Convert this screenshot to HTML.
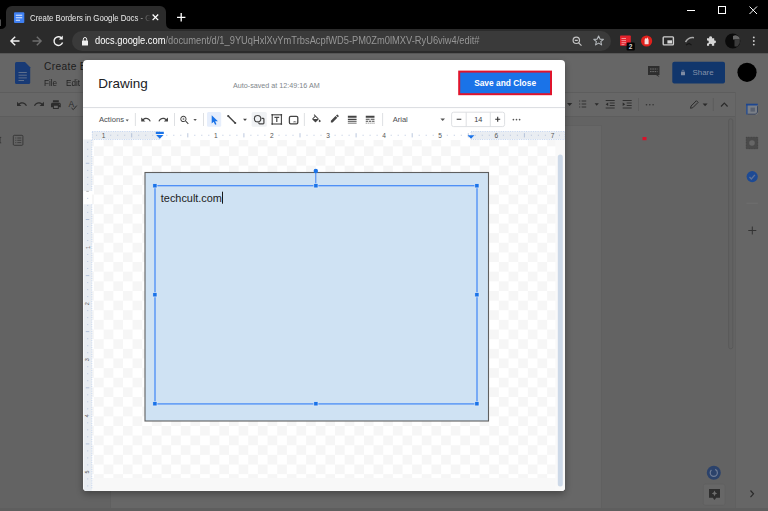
<!DOCTYPE html>
<html><head><meta charset="utf-8">
<style>
*{box-sizing:border-box;margin:0;padding:0}
html,body{width:768px;height:511px;overflow:hidden;background:#666;font-family:"Liberation Sans",sans-serif;}
.abs{position:absolute}
svg{position:absolute;overflow:visible}
#titlebar{left:0;top:0;width:768px;height:29px;background:#000}
#tab{left:6.300px;top:6px;width:159.700px;height:24px;background:#2b2b2b;border-radius:6px 6px 0 0}
#tabtxt{left:29.5px;top:12.600px;font-size:8.8px;color:#ececec;white-space:nowrap;width:136px;overflow:hidden;transform:scaleX(.887);transform-origin:0 0;-webkit-mask-image:linear-gradient(90deg,#000 88%,transparent 100%)}
#toolbar{left:0;top:28.800px;width:768px;height:25.200px;background:linear-gradient(#2b2b2b 0,#2b2b2b 23.800px,#565656 23.800px)}
#pill{left:72px;top:31px;width:538.500px;height:19.500px;border-radius:10px;background:#3a3a3a}
#url{left:95px;top:35px;font-size:10.4px;color:#fff;white-space:nowrap;transform:scaleX(.897);transform-origin:0 0}
#url span{color:#969696}
#page{left:0;top:53.5px;width:768px;height:458px;background:#666}
.dim{color:#1c1c1c}
#dlg{left:83.300px;top:60px;width:481.700px;height:431px;background:#fff;border-radius:4px;overflow:hidden;box-shadow:0 3px 7px rgba(0,0,0,.32)}
</style></head><body>
<!-- CHROME -->
<div class="abs" id="titlebar"></div>
<div class="abs" id="tab"></div>
<div class="abs" id="tabtxt">Create Borders in Google Docs - G</div>
<div class="abs" id="toolbar"></div>
<div class="abs" id="pill"></div>
<div class="abs" id="url">docs.google.com<span>/document/d/1_9YUqHxlXvYmTrbsAcpfWD5-PM0Zm0lMXV-RyU6viw4/edit#</span></div>

<svg style="left:0;top:0" width="768" height="54" viewBox="0 0 768 54">
<!-- tab curves -->
<path d="M0.500 29 Q6.300 29 6.300 23 L6.300 29 Z" fill="#2b2b2b"/><rect x="0" y="19.500" width="0.800" height="6.500" fill="#666"/>
<path d="M172 29 Q166 29 166 23 L166 29 Z" fill="#2b2b2b"/>
<!-- favicon docs -->
<rect x="14" y="12.200" width="10.300" height="10.800" rx="1" fill="#3f80f2"/>
<path d="M15.800 15.200h6.400M15.800 17.700h6.400M15.800 20.300h4.200" stroke="#dfe9fd" stroke-width="1.100"/>
<!-- tab close -->
<path d="M152.600 14.500l5.600 5.600M158.200 14.500l-5.600 5.600" stroke="#fff" stroke-width="1.3"/>
<!-- new tab plus -->
<path d="M177 17.300h8.400M181.200 13.100v8.400" stroke="#fff" stroke-width="1.300"/>
<!-- window controls -->
<path d="M687 10.500h8" stroke="#fff" stroke-width="1"/>
<rect x="718.500" y="6.500" width="7" height="7" fill="none" stroke="#fff" stroke-width="1"/>
<path d="M749.500 6.500l7.500 7.500M757 6.500l-7.500 7.500" stroke="#fff" stroke-width="1"/>
<!-- back -->
<path transform="translate(0 -.5)" d="M19.500 41.500h-8M15.200 37.200l-4.300 4.300 4.300 4.300" stroke="#f0f0f0" stroke-width="1.4" fill="none"/>
<!-- forward -->
<path transform="translate(0 -.5)" d="M32.500 41.500h8M36.800 37.200l4.300 4.300-4.300 4.300" stroke="#6e6e6e" stroke-width="1.4" fill="none"/>
<!-- reload -->
<path transform="translate(-.8 -.4)" d="M62.300 38.300a4.400 4.400 0 1 0 1.100 4.700" stroke="#f0f0f0" stroke-width="1.4" fill="none"/>
<path transform="translate(-.8 -.4)" d="M63.600 35.800v4h-4z" fill="#f0f0f0"/>
<!-- lock -->
<rect x="82" y="40.500" width="6" height="5" rx="0.600" fill="#f0f0f0"/>
<path d="M83.300 40.800v-1.600a1.700 1.700 0 0 1 3.400 0v1.600" stroke="#f0f0f0" stroke-width="1" fill="none"/>
<!-- zoom -->
<circle cx="576.300" cy="40.300" r="3.200" stroke="#c4c4c4" stroke-width="1.200" fill="none"/>
<path d="M578.600 42.800l2.900 2.900M574.800 40.300h3" stroke="#c4c4c4" stroke-width="1.200"/>
<!-- star -->
<path transform="translate(-.4 -.3)" d="M599 36.300l1.400 3.100 3.400.3-2.600 2.200.8 3.300-3-1.800-3 1.800.8-3.300-2.600-2.200 3.400-.3z" stroke="#b4b8bc" stroke-width="1.100" fill="none" stroke-linejoin="round"/>
<!-- ext1 red -->
<rect x="620" y="35.400" width="10.800" height="10.400" rx="0.800" fill="#e3222c"/>
<path d="M621.500 38.500h4.500M621.500 40.600h4.500M621.500 42.700h4.500M621.500 44.600h3" stroke="#f3b0b3" stroke-width="0.800" fill="none"/>
<rect x="626.600" y="42.500" width="8.200" height="8" rx="1.200" fill="#050505"/>
<text x="628.800" y="49.200" font-size="6.600" font-weight="700" fill="#d0d4d8" font-family="Liberation Sans, sans-serif">2</text>
<!-- ext2 red circle -->
<circle cx="646.600" cy="41" r="5.600" fill="#e0201c"/>
<path d="M644.600 44.200v-4.500l1-1.800 1 .8.800-1.500 1.200 2.500v4.500z" fill="#f4dcdc"/>
<!-- pip -->
<rect x="663.200" y="36.900" width="10.200" height="8" rx="0.800" fill="none" stroke="#cfcfcf" stroke-width="1.400"/>
<rect x="667.400" y="40.300" width="4.600" height="3.200" fill="#d8d8d8"/>
<!-- curved -->
<path d="M685.500 42q3-5 8.500-4.300" stroke="#a8a8a8" stroke-width="1.500" fill="none"/>
<path d="M686 45l3-1.500 2.500 1.500" stroke="#161616" stroke-width="1.200" fill="none"/>
<!-- puzzle -->
<path transform="translate(1 -0.300)" d="M706 38.500h2.300a1.400 1.400 0 1 1 2.600 0h2.300v2.300a1.400 1.400 0 1 1 0 2.700v2.500h-2.400a1.400 1.400 0 1 0-2.600 0H706v-2.400a1.400 1.400 0 1 0 0-2.700z" fill="#d6d6d6"/>
<!-- avatar -->
<circle cx="732.700" cy="41" r="7.600" fill="#0a0a0a"/>
<path d="M733 36q3-2 6 1l1 2.500h-7z" fill="#666"/>
<path d="M734.500 40h5.300v3l-2.300 3.500h-3z" fill="#3c3c3c"/>
<!-- menu -->
<circle cx="753.800" cy="37.400" r="0.950" fill="#cfcfcf"/><circle cx="753.800" cy="41" r="0.950" fill="#cfcfcf"/><circle cx="753.800" cy="44.600" r="0.950" fill="#cfcfcf"/>
</svg>

<!-- PAGE -->
<div class="abs" id="page"></div>

<div class="abs" style="left:0;top:92px;width:735px;height:25px;background:#676767;border-top:1px solid #5d5d5d;border-bottom:1px solid #5d5d5d"></div>
<div class="abs" style="left:0;top:117px;width:735px;height:394px;background:#636363"></div>
<div class="abs" style="left:110px;top:125.300px;width:492px;height:386px;background:#676767;border:1px solid #606060;border-bottom:0"></div>
<div class="abs" style="left:735px;top:92px;width:1px;height:419px;background:#606060"></div>
<div class="abs" style="left:0;top:508px;width:768px;height:3px;background:#5e5e5e"></div>
<div class="abs dim" style="left:44px;top:60.500px;font-size:10.200px;white-space:nowrap;letter-spacing:.35px">Create Borders</div>
<div class="abs dim" style="left:44px;top:78px;font-size:8.600px;white-space:nowrap;color:#222;transform:scaleX(.95);transform-origin:0 0">File</div>
<div class="abs dim" style="left:65.700px;top:78px;font-size:8.600px;white-space:nowrap;color:#222;transform:scaleX(.95);transform-origin:0 0">Edit</div>
<svg style="left:0;top:54px" width="768" height="457" viewBox="0 54 768 457">
<!-- docs icon -->
<path d="M15 63.500q0-1.500 1.500-1.500h8.500l5.200 5.200v15.300q0 1.500-1.500 1.500h-12.200q-1.500 0-1.500-1.500z" fill="#183a75"/>
<path d="M18.500 72.500h8.300M18.500 75.200h8.300M18.500 77.900h8.300M18.500 80.500h5.500" stroke="#66758f" stroke-width="0.9"/>
<!-- toolbar icons left -->
<path transform="translate(16.03 98.30) scale(0.486)" d="M12.500 8c-2.650 0-5.050.990-6.900 2.600L2 7v9h9l-3.620-3.620c1.390-1.160 3.160-1.880 5.120-1.880 3.540 0 6.550 2.310 7.600 5.500l2.370-.780C21.080 11.030 17.150 8 12.500 8z" fill="#2c2c2c"/>
<path transform="translate(33.25 98.30) scale(0.486)" d="M18.400 10.600C16.550 8.990 14.150 8 11.500 8c-4.650 0-8.580 3.030-9.960 7.220L3.900 16c1.050-3.190 4.050-5.500 7.600-5.500 1.950 0 3.730.720 5.120 1.880L13 16h9V7l-3.600 3.600z" fill="#2c2c2c"/>
<path transform="translate(50.00 98.80) scale(0.49)" d="M19 8H5c-1.660 0-3 1.340-3 3v6h4v4h12v-4h4v-6c0-1.660-1.340-3-3-3zm-3 11H8v-5h8v5zm3-7c-.550 0-1-.450-1-1s.450-1 1-1 1 .450 1 1-.450 1-1 1zm-1-9H6v4h12V3z" fill="#2c2c2c"/>
<text x="68.500" y="107" font-size="8.500" fill="#2a2a2a" font-family="Liberation Sans, sans-serif">A</text>
<path d="M71.500 108l1.800 1.600 3.500-4" stroke="#2a2a2a" stroke-width="1" fill="none"/>
<!-- outline icon -->
<rect x="13.300" y="135.300" width="9.600" height="10" rx="1" fill="none" stroke="#333" stroke-width="0.900"/>
<path d="M15.300 138h1M17.300 138h4M15.300 140.300h1M17.300 140.300h4M15.300 142.600h1M17.300 142.600h4" stroke="#333" stroke-width="0.800"/>
<!-- right header -->
<path d="M648 66h11.500v9h-1.500l1.500 2.200-3.500-2.200h-8z" fill="#2e2e2e"/>
<path d="M650 69h7.500M650 71.600h7.500" stroke="#777" stroke-width="0.900" stroke-dasharray="1.600 0.700"/>
<rect x="672.300" y="61.800" width="52.700" height="21.600" rx="2" fill="#11366c"/>
<rect x="681" y="71.800" width="4" height="3.500" rx="0.500" fill="#7f8ca4"/><path d="M682 71.800v-.7a1 1 0 0 1 2 0v.7" stroke="#7f8ca4" stroke-width="0.700" fill="none"/>
<text x="692.500" y="74.800" font-size="7.900" fill="#8391a9" font-family="Liberation Sans, sans-serif">Share</text>
<circle cx="747" cy="72.300" r="9.600" fill="#000"/>
<!-- right toolbar -->
<path d="M567 103l2.600 3 2.600-3z" fill="#2a2a2a"/>
<path transform="translate(-1.800 0)" d="M581 101h1M583.500 101h4.500M581 104h1M583.500 104h4.500M581 107h1M583.500 107h4.500" stroke="#2a2a2a" stroke-width="0.900"/>
<path d="M594.600 103.300l2.100 2.500 2.100-2.500z" fill="#2a2a2a"/>
<g transform="translate(-5.300 0)"><path d="M611 100.500h9M615 103h5M615 105.500h5M611 108h9" stroke="#2a2a2a" stroke-width="0.900"/><path d="M613.500 102.500v3.500l-2.500-1.750z" fill="#2a2a2a"/></g>
<g transform="translate(-4.300 0)"><path d="M627 100.500h9M631 103h5M631 105.500h5M627 108h9" stroke="#2a2a2a" stroke-width="0.900"/><path d="M627 102.500v3.500l2.500-1.750z" fill="#2a2a2a"/></g>
<path d="M638.500 98v13" stroke="#5a5a5a" stroke-width="0.800"/>
<circle cx="646.500" cy="104.800" r="0.800" fill="#333"/><circle cx="649.800" cy="104.800" r="0.800" fill="#333"/><circle cx="653.100" cy="104.800" r="0.800" fill="#333"/>
<path d="M690.500 108.300l.6-2.300 5.300-5.300 1.700 1.700-5.300 5.300z" fill="none" stroke="#2a2a2a" stroke-width="1"/>
<path d="M702.600 103.500l2.500 2.800 2.500-2.800z" fill="#2a2a2a"/>
<path d="M713.300 98v13" stroke="#5a5a5a" stroke-width="0.800"/>
<path d="M721 106.500l3.300-3.300 3.300 3.300" stroke="#2a2a2a" stroke-width="1.200" fill="none"/>
<!-- scrollbar -->
<rect x="728.600" y="118.800" width="4.200" height="230" rx="2.100" fill="#626262" stroke="#565656" stroke-width="0.700"/>
<!-- red dot -->
<rect x="642.500" y="137" width="4" height="3.200" fill="#d8122a"/>
<!-- side panel -->
<rect x="746.300" y="104" width="11.200" height="10.600" rx="0.800" fill="#7a7f87"/>
<path d="M746 104.600h11.800" stroke="#1d4690" stroke-width="1.800"/><path d="M746.900 104v10.600" stroke="#1d4690" stroke-width="1.300"/><path d="M747.500 114.200h8l2-2v-6" stroke="#39455c" stroke-width="1" fill="none"/>
<rect x="750.500" y="107.600" width="4.400" height="4" fill="#596170"/>
<rect x="746.300" y="137.300" width="11.400" height="11.400" fill="#4a4a4a" stroke="#3e3e3e" stroke-width="0.800" stroke-dasharray="1 0.600"/>
<circle cx="752" cy="143" r="2.800" fill="#666"/>
<circle cx="752.200" cy="176.600" r="5.600" fill="#1d4a94"/>
<path d="M749.500 177.100l1.800 1.800 3.600-4" stroke="#5f7299" stroke-width="1.400" fill="none"/>
<path d="M746.500 203.200h11.300" stroke="#727272" stroke-width="0.800"/>
<path d="M748.300 230.500h8M752.300 226.500v8" stroke="#333" stroke-width="1"/>
<circle cx="713.800" cy="472.700" r="7" fill="#2b426b"/>
<circle cx="713.800" cy="472.700" r="3.600" fill="none" stroke="#6d7b95" stroke-width="1.200" stroke-dasharray="14 4"/>
<rect x="703.300" y="484" width="21.700" height="21.300" rx="2" fill="#676767" stroke="#5f5f5f" stroke-width="0.800"/>
<path d="M709 489h11v8.800h-3.800l-1.700 2.200-1.700-2.200h-3.800z" fill="#2e2e2e"/>
<path d="M714.500 490.600l.9 1.900 1.900.9-1.900.9-.9 1.900-.9-1.900-1.900-.9 1.900-.9z" fill="#6e6e6e"/>
<path d="M750.500 490.500l3 3.300-3 3.300" stroke="#2a2a2a" stroke-width="1.200" fill="none"/>
<path d="M1.200 137.400h-1.200v5.400h1.200" stroke="#333" stroke-width="0.900" fill="none"/>
</svg>

<!-- DIALOG -->
<div class="abs" id="dlg">

<svg style="left:0;top:0" width="482" height="431" viewBox="83 60 482 431">
<defs>
<pattern id="chk" x="84.400" y="136.750" width="19.280" height="19.280" patternUnits="userSpaceOnUse">
<rect width="19.280" height="19.280" fill="#fff"/>
<rect x="0" y="0" width="9.640" height="9.640" fill="#f6f6f6"/><rect x="9.640" y="9.640" width="9.640" height="9.640" fill="#f6f6f6"/>
</pattern>
</defs>
<!-- header -->
<text x="98.300" y="88.400" font-size="13.500" fill="#202124" font-family="Liberation Sans, sans-serif">Drawing</text>
<text x="233" y="88" font-size="7.200" fill="#80868b" font-family="Liberation Sans, sans-serif">Auto-saved at 12:49:16 AM</text>
<rect x="459.200" y="71.600" width="91.800" height="22.600" fill="#1a73e8" stroke="#e0142c" stroke-width="2"/>
<text x="505.100" y="85.800" font-size="8.400" font-weight="700" fill="#fff" text-anchor="middle" font-family="Liberation Sans, sans-serif">Save and Close</text>
<path d="M83 107.600h482" stroke="#dadce0" stroke-width="1"/>
<!-- toolbar -->
<text x="98.900" y="122" font-size="7.650" fill="#4a4d50" font-family="Liberation Sans, sans-serif">Actions</text>
<path d="M125.600 119.600l1.600 1.800 1.600-1.800z" fill="#555"/>
<path d="M135.400 113v13M174.500 113v13M203.500 113v13M304.400 113v13M382.600 113v13" stroke="#dadce0" stroke-width="0.900"/>
<path transform="translate(140.27 114.13) scale(0.467)" d="M12.500 8c-2.650 0-5.050.990-6.900 2.600L2 7v9h9l-3.620-3.620c1.390-1.160 3.160-1.880 5.120-1.880 3.540 0 6.550 2.310 7.600 5.500l2.370-.780C21.080 11.030 17.150 8 12.500 8z" fill="#444"/>
<path transform="translate(157.70 114.13) scale(0.467)" d="M18.400 10.600C16.550 8.990 14.150 8 11.500 8c-4.650 0-8.580 3.030-9.960 7.220L3.900 16c1.050-3.190 4.050-5.500 7.600-5.500 1.950 0 3.730.720 5.120 1.880L13 16h9V7l-3.600 3.600z" fill="#444"/>
<path transform="translate(178.86 114.36) scale(0.48)" d="M15.500 14h-.790l-.280-.270C15.410 12.590 16 11.110 16 9.500 16 5.910 13.090 3 9.500 3S3 5.910 3 9.500 5.910 16 9.500 16c1.610 0 3.090-.590 4.230-1.570l.270.280v.790l5 4.990L20.490 19l-4.990-5zm-6 0C7.010 14 5 11.990 5 9.500S7.010 5 9.500 5 14 7.010 14 9.500 11.990 14 9.500 14zm2.500-4h-2v2H9v-2H7V9h2V7h1v2h2v1z" fill="#444"/>
<path d="M193.400 119.100l1.700 1.900 1.700-1.900z" fill="#555"/>
<rect x="207" y="112" width="14.200" height="14.800" rx="1.500" fill="#e6eefc"/>
<path d="M211.700 115.300v8.300l2-1.800 1.400 3 1.400-.65-1.400-2.950h2.800z" fill="#1a73e8"/>
<path d="M228.200 116l7 7" stroke="#444" stroke-width="1.400"/><circle cx="228.200" cy="116" r="1.100" fill="#444"/><circle cx="235.200" cy="123" r="1.100" fill="#444"/>
<path d="M243 118.700l2 2.200 2-2.200z" fill="#444"/>
<rect x="251.600" y="112" width="15.200" height="14.800" rx="1.500" fill="#f0f2f4"/>
<circle cx="257.600" cy="118.700" r="3.200" stroke="#444" stroke-width="1.200" fill="none"/><path d="M258.800 122.500v.5q0 .8.800.8h3.500q.8 0 .8-.8v-3.800q0-.8-.8-.8h-1.500" stroke="#444" stroke-width="1.200" fill="none"/>
<rect x="272.200" y="114.800" width="9.200" height="9.200" stroke="#444" stroke-width="1.100" fill="none"/><path d="M274.400 117.300h4.800M276.800 117.300v4.600" stroke="#444" stroke-width="1.200"/><path d="M271.500 114.100h1.400v1.400h-1.400zM280.700 114.100h1.400v1.400h-1.400zM271.500 123.300h1.400v1.400h-1.400zM280.700 123.300h1.400v1.400h-1.400z" fill="#444"/>
<rect x="289.400" y="116.400" width="8.400" height="7.400" rx="1.300" stroke="#444" stroke-width="1.300" fill="none"/><path d="M293 122.300l1.200-1.300 .9.900.6-.6 1 1z" fill="#444"/>
<path transform="translate(310.80 114.25) scale(0.467)" d="M16.560 8.940L7.620 0 6.210 1.410l2.380 2.380-5.150 5.150c-.590.590-.590 1.540 0 2.120l5.500 5.500c.290.290.680.440 1.060.440s.770-.150 1.060-.440l5.500-5.500c.590-.580.590-1.530 0-2.120zM5.210 10L10 5.210 14.790 10H5.210zM19 11.500s-2 2.170-2 3.500c0 1.100.900 2 2 2s2-.900 2-2c0-1.330-2-3.500-2-3.500z" fill="#444"/>
<path transform="translate(329.00 114.50) scale(0.467)" d="M17.750 7L14 3.250l-10 10V17h3.750l10-10zm2.960-2.960c.390-.390.390-1.020 0-1.410L18.370.290c-.390-.390-1.020-.390-1.410 0L15 2.250 18.750 6l1.960-1.960z" fill="#444"/>
<path transform="translate(346.40 113.90) scale(0.485)" d="M3 17h18v-2H3v2zm0 3h18v-1H3v1zm0-7h18v-3H3v3zm0-9v4h18V4H3z" fill="#444"/>
<path transform="translate(364.30 113.90) scale(0.485)" d="M3 16h5v-2H3v2zm6.500 0h5v-2h-5v2zm6.500 0h5v-2h-5v2zM3 20h2v-2H3v2zm4 0h2v-2H7v2zm4 0h2v-2h-2v2zm4 0h2v-2h-2v2zm4 0h2v-2h-2v2zM3 12h8v-2H3v2zm10 0h8v-2h-8v2zM3 4v4h18V4H3z" fill="#444"/>
<text x="392.700" y="122" font-size="7.550" fill="#4a4d50" font-family="Liberation Sans, sans-serif">Arial</text>
<path d="M440.400 118.500l2.300 2.600 2.300-2.600z" fill="#555"/>
<rect x="451.600" y="112.200" width="53" height="14.400" rx="2" fill="#fff" stroke="#dadce0" stroke-width="0.900"/>
<path d="M466.200 112.200v14.400M490.300 112.200v14.400" stroke="#dadce0" stroke-width="0.900"/>
<path d="M456.700 119.300h4.600" stroke="#333" stroke-width="1.100"/>
<text x="478.300" y="121.900" font-size="7.300" fill="#3c4043" text-anchor="middle" font-family="Liberation Sans, sans-serif">14</text>
<path d="M495.200 119.300h5M497.700 116.800v5" stroke="#333" stroke-width="1.100"/>
<circle cx="513.400" cy="119.600" r="0.850" fill="#555"/><circle cx="516.500" cy="119.600" r="0.850" fill="#555"/><circle cx="519.600" cy="119.600" r="0.850" fill="#555"/>
<!-- canvas -->
<rect x="83" y="131" width="482" height="360" fill="#fff"/>
<rect x="92" y="140" width="473" height="338" fill="url(#chk)"/>
<rect x="92" y="478" width="473" height="13" fill="#f8f8f8"/>
<rect x="555.300" y="140" width="10" height="351" fill="#f9f9f9"/>
<!-- rulers -->
<rect x="92" y="131.300" width="67.800" height="8.200" fill="#e9edf2"/>
<rect x="471" y="131.300" width="94" height="8.200" fill="#e9edf2"/>
<rect x="92.300" y="131.500" width="67.500" height="8" fill="none" stroke="#a9c4ee" stroke-width="0.700" stroke-dasharray="0.800 1.500"/>
<rect x="471" y="131.500" width="94" height="8" fill="none" stroke="#a9c4ee" stroke-width="0.700" stroke-dasharray="0.800 1.500"/>
<rect x="83.500" y="139.500" width="8.300" height="351.500" fill="#e9edf2"/>
<rect x="83.500" y="191" width="8.500" height="13.300" fill="#fff"/>
<path d="M91.800 140v51M91.800 204.500v284" stroke="#a9c4ee" stroke-width="0.700" stroke-dasharray="0.800 1.500"/>
<path d="M96.6 134.700v1.300" stroke="#b4c3dd" stroke-width="0.7"/><path d="M110.7 134.700v1.300" stroke="#b4c3dd" stroke-width="0.7"/><path d="M117.7 134.700v1.300" stroke="#b4c3dd" stroke-width="0.7"/><path d="M124.7 134.700v1.300" stroke="#b4c3dd" stroke-width="0.7"/><path d="M131.7 133.2v4.200" stroke="#9db0d0" stroke-width="0.7"/><path d="M138.7 134.700v1.300" stroke="#b4c3dd" stroke-width="0.7"/><path d="M145.7 134.700v1.300" stroke="#b4c3dd" stroke-width="0.7"/><path d="M152.7 134.700v1.300" stroke="#b4c3dd" stroke-width="0.7"/><path d="M166.8 134.700v1.300" stroke="#b4c3dd" stroke-width="0.7"/><path d="M173.8 134.700v1.300" stroke="#b4c3dd" stroke-width="0.7"/><path d="M180.8 134.700v1.300" stroke="#b4c3dd" stroke-width="0.7"/><path d="M187.8 133.2v4.200" stroke="#9db0d0" stroke-width="0.7"/><path d="M194.8 134.700v1.300" stroke="#b4c3dd" stroke-width="0.7"/><path d="M201.8 134.700v1.300" stroke="#b4c3dd" stroke-width="0.7"/><path d="M208.8 134.700v1.300" stroke="#b4c3dd" stroke-width="0.7"/><path d="M222.9 134.700v1.300" stroke="#b4c3dd" stroke-width="0.7"/><path d="M229.9 134.700v1.300" stroke="#b4c3dd" stroke-width="0.7"/><path d="M236.9 134.700v1.300" stroke="#b4c3dd" stroke-width="0.7"/><path d="M243.9 133.2v4.200" stroke="#9db0d0" stroke-width="0.7"/><path d="M250.9 134.700v1.300" stroke="#b4c3dd" stroke-width="0.7"/><path d="M257.9 134.700v1.300" stroke="#b4c3dd" stroke-width="0.7"/><path d="M264.9 134.700v1.300" stroke="#b4c3dd" stroke-width="0.7"/><path d="M279.0 134.700v1.300" stroke="#b4c3dd" stroke-width="0.7"/><path d="M286.0 134.700v1.300" stroke="#b4c3dd" stroke-width="0.7"/><path d="M293.0 134.700v1.300" stroke="#b4c3dd" stroke-width="0.7"/><path d="M300.0 133.2v4.200" stroke="#9db0d0" stroke-width="0.7"/><path d="M307.0 134.700v1.300" stroke="#b4c3dd" stroke-width="0.7"/><path d="M314.0 134.700v1.300" stroke="#b4c3dd" stroke-width="0.7"/><path d="M321.0 134.700v1.300" stroke="#b4c3dd" stroke-width="0.7"/><path d="M335.1 134.700v1.300" stroke="#b4c3dd" stroke-width="0.7"/><path d="M342.1 134.700v1.300" stroke="#b4c3dd" stroke-width="0.7"/><path d="M349.1 134.700v1.300" stroke="#b4c3dd" stroke-width="0.7"/><path d="M356.1 133.2v4.200" stroke="#9db0d0" stroke-width="0.7"/><path d="M363.1 134.700v1.300" stroke="#b4c3dd" stroke-width="0.7"/><path d="M370.1 134.700v1.300" stroke="#b4c3dd" stroke-width="0.7"/><path d="M377.1 134.700v1.300" stroke="#b4c3dd" stroke-width="0.7"/><path d="M391.2 134.700v1.300" stroke="#b4c3dd" stroke-width="0.7"/><path d="M398.2 134.700v1.300" stroke="#b4c3dd" stroke-width="0.7"/><path d="M405.2 134.700v1.300" stroke="#b4c3dd" stroke-width="0.7"/><path d="M412.2 133.2v4.200" stroke="#9db0d0" stroke-width="0.7"/><path d="M419.2 134.700v1.300" stroke="#b4c3dd" stroke-width="0.7"/><path d="M426.2 134.700v1.300" stroke="#b4c3dd" stroke-width="0.7"/><path d="M433.2 134.700v1.300" stroke="#b4c3dd" stroke-width="0.7"/><path d="M447.3 134.700v1.300" stroke="#b4c3dd" stroke-width="0.7"/><path d="M454.3 134.700v1.300" stroke="#b4c3dd" stroke-width="0.7"/><path d="M461.3 134.700v1.300" stroke="#b4c3dd" stroke-width="0.7"/><path d="M468.3 133.2v4.200" stroke="#9db0d0" stroke-width="0.7"/><path d="M475.3 134.700v1.300" stroke="#b4c3dd" stroke-width="0.7"/><path d="M482.3 134.700v1.300" stroke="#b4c3dd" stroke-width="0.7"/><path d="M489.3 134.700v1.300" stroke="#b4c3dd" stroke-width="0.7"/><path d="M503.4 134.700v1.300" stroke="#b4c3dd" stroke-width="0.7"/><path d="M510.4 134.700v1.300" stroke="#b4c3dd" stroke-width="0.7"/><path d="M517.4 134.700v1.300" stroke="#b4c3dd" stroke-width="0.7"/><path d="M524.4 133.2v4.200" stroke="#9db0d0" stroke-width="0.7"/><path d="M531.4 134.700v1.300" stroke="#b4c3dd" stroke-width="0.7"/><path d="M538.4 134.700v1.300" stroke="#b4c3dd" stroke-width="0.7"/><path d="M545.4 134.700v1.300" stroke="#b4c3dd" stroke-width="0.7"/><path d="M559.5 134.700v1.300" stroke="#b4c3dd" stroke-width="0.7"/>
<text x="103.7" y="137.800" font-size="6.600" fill="#555" text-anchor="middle" font-family="Liberation Sans, sans-serif">1</text><text x="215.8" y="137.800" font-size="6.600" fill="#555" text-anchor="middle" font-family="Liberation Sans, sans-serif">1</text><text x="271.9" y="137.800" font-size="6.600" fill="#555" text-anchor="middle" font-family="Liberation Sans, sans-serif">2</text><text x="328.1" y="137.800" font-size="6.600" fill="#555" text-anchor="middle" font-family="Liberation Sans, sans-serif">3</text><text x="384.1" y="137.800" font-size="6.600" fill="#555" text-anchor="middle" font-family="Liberation Sans, sans-serif">4</text><text x="440.2" y="137.800" font-size="6.600" fill="#555" text-anchor="middle" font-family="Liberation Sans, sans-serif">5</text><text x="496.4" y="137.800" font-size="6.600" fill="#555" text-anchor="middle" font-family="Liberation Sans, sans-serif">6</text><text x="552.5" y="137.800" font-size="6.600" fill="#555" text-anchor="middle" font-family="Liberation Sans, sans-serif">7</text>
<path d="M87 142.3h1.300" stroke="#b4c3dd" stroke-width="0.7"/><path d="M87 149.3h1.300" stroke="#b4c3dd" stroke-width="0.7"/><path d="M87 156.3h1.300" stroke="#b4c3dd" stroke-width="0.7"/><path d="M85.800 163.3h3.500" stroke="#9db0d0" stroke-width="0.7"/><path d="M87 170.4h1.300" stroke="#b4c3dd" stroke-width="0.7"/><path d="M87 177.4h1.300" stroke="#b4c3dd" stroke-width="0.7"/><path d="M87 184.4h1.300" stroke="#b4c3dd" stroke-width="0.7"/><path d="M87 198.4h1.300" stroke="#b4c3dd" stroke-width="0.7"/><path d="M87 205.4h1.300" stroke="#b4c3dd" stroke-width="0.7"/><path d="M87 212.4h1.300" stroke="#b4c3dd" stroke-width="0.7"/><path d="M85.800 219.5h3.500" stroke="#9db0d0" stroke-width="0.7"/><path d="M87 226.5h1.300" stroke="#b4c3dd" stroke-width="0.7"/><path d="M87 233.5h1.300" stroke="#b4c3dd" stroke-width="0.7"/><path d="M87 240.5h1.300" stroke="#b4c3dd" stroke-width="0.7"/><path d="M87 254.5h1.300" stroke="#b4c3dd" stroke-width="0.7"/><path d="M87 261.5h1.300" stroke="#b4c3dd" stroke-width="0.7"/><path d="M87 268.5h1.300" stroke="#b4c3dd" stroke-width="0.7"/><path d="M85.800 275.6h3.500" stroke="#9db0d0" stroke-width="0.7"/><path d="M87 282.6h1.300" stroke="#b4c3dd" stroke-width="0.7"/><path d="M87 289.6h1.300" stroke="#b4c3dd" stroke-width="0.7"/><path d="M87 296.6h1.300" stroke="#b4c3dd" stroke-width="0.7"/><path d="M87 310.6h1.300" stroke="#b4c3dd" stroke-width="0.7"/><path d="M87 317.6h1.300" stroke="#b4c3dd" stroke-width="0.7"/><path d="M87 324.6h1.300" stroke="#b4c3dd" stroke-width="0.7"/><path d="M85.800 331.6h3.500" stroke="#9db0d0" stroke-width="0.7"/><path d="M87 338.7h1.300" stroke="#b4c3dd" stroke-width="0.7"/><path d="M87 345.7h1.300" stroke="#b4c3dd" stroke-width="0.7"/><path d="M87 352.7h1.300" stroke="#b4c3dd" stroke-width="0.7"/><path d="M87 366.7h1.300" stroke="#b4c3dd" stroke-width="0.7"/><path d="M87 373.7h1.300" stroke="#b4c3dd" stroke-width="0.7"/><path d="M87 380.7h1.300" stroke="#b4c3dd" stroke-width="0.7"/><path d="M85.800 387.8h3.500" stroke="#9db0d0" stroke-width="0.7"/><path d="M87 394.8h1.300" stroke="#b4c3dd" stroke-width="0.7"/><path d="M87 401.8h1.300" stroke="#b4c3dd" stroke-width="0.7"/><path d="M87 408.8h1.300" stroke="#b4c3dd" stroke-width="0.7"/><path d="M87 422.8h1.300" stroke="#b4c3dd" stroke-width="0.7"/><path d="M87 429.8h1.300" stroke="#b4c3dd" stroke-width="0.7"/><path d="M87 436.8h1.300" stroke="#b4c3dd" stroke-width="0.7"/><path d="M85.800 443.9h3.500" stroke="#9db0d0" stroke-width="0.7"/><path d="M87 450.9h1.300" stroke="#b4c3dd" stroke-width="0.7"/><path d="M87 457.9h1.300" stroke="#b4c3dd" stroke-width="0.7"/><path d="M87 464.9h1.300" stroke="#b4c3dd" stroke-width="0.7"/><path d="M87 478.9h1.300" stroke="#b4c3dd" stroke-width="0.7"/><path d="M87 485.9h1.300" stroke="#b4c3dd" stroke-width="0.7"/>
<text x="87.500" y="247.5" font-size="5.500" fill="#555" text-anchor="middle" transform="rotate(-90 87.500 247.5)" dy="2" font-family="Liberation Sans, sans-serif">1</text><text x="87.500" y="303.6" font-size="5.500" fill="#555" text-anchor="middle" transform="rotate(-90 87.500 303.6)" dy="2" font-family="Liberation Sans, sans-serif">2</text><text x="87.500" y="359.7" font-size="5.500" fill="#555" text-anchor="middle" transform="rotate(-90 87.500 359.7)" dy="2" font-family="Liberation Sans, sans-serif">3</text><text x="87.500" y="415.8" font-size="5.500" fill="#555" text-anchor="middle" transform="rotate(-90 87.500 415.8)" dy="2" font-family="Liberation Sans, sans-serif">4</text><text x="87.500" y="471.9" font-size="5.500" fill="#555" text-anchor="middle" transform="rotate(-90 87.500 471.9)" dy="2" font-family="Liberation Sans, sans-serif">5</text><path d="M86.300 191.4h2.500" stroke="#999" stroke-width="0.7"/>
<path d="M155.800 131.800h8v2.200h-8z" fill="#1a73e8"/><path d="M156.100 135h7.400l-3.700 3.800z" fill="#1a73e8"/>
<path d="M467.600 135.200h6.800l-3.400 3.600z" fill="#1a73e8"/>
<!-- shape -->
<rect x="145" y="172.500" width="343.500" height="248.500" fill="#cfe2f3" stroke="#5f5f5f" stroke-width="1.100"/>
<path d="M315.800 172v13" stroke="#4285f4" stroke-width="1"/><circle cx="315.800" cy="171" r="2.200" fill="#1a73e8"/>
<rect x="155" y="185.700" width="322" height="218.200" fill="none" stroke="#4a8df6" stroke-width="1.300"/>
<rect x="152.8" y="183.7" width="4.200" height="4.200" fill="#1a73e8" stroke="#e8f0fb" stroke-width="0.600"/><rect x="313.8" y="183.7" width="4.200" height="4.200" fill="#1a73e8" stroke="#e8f0fb" stroke-width="0.600"/><rect x="474.8" y="183.7" width="4.200" height="4.200" fill="#1a73e8" stroke="#e8f0fb" stroke-width="0.600"/><rect x="152.8" y="292.7" width="4.200" height="4.200" fill="#1a73e8" stroke="#e8f0fb" stroke-width="0.600"/><rect x="474.8" y="292.7" width="4.200" height="4.200" fill="#1a73e8" stroke="#e8f0fb" stroke-width="0.600"/><rect x="152.8" y="401.7" width="4.200" height="4.200" fill="#1a73e8" stroke="#e8f0fb" stroke-width="0.600"/><rect x="313.8" y="401.7" width="4.200" height="4.200" fill="#1a73e8" stroke="#e8f0fb" stroke-width="0.600"/><rect x="474.8" y="401.7" width="4.200" height="4.200" fill="#1a73e8" stroke="#e8f0fb" stroke-width="0.600"/>
<text x="160.800" y="201.600" font-size="10.900" fill="#222" font-family="Liberation Sans, sans-serif">techcult.com</text>
<path d="M222.500 191.700v12" stroke="#000" stroke-width="0.900"/>
<!-- dialog scrollbar -->
<rect x="557.800" y="154.500" width="5" height="332" rx="2.500" fill="#cdd9e8"/>
</svg>

</div>
</body></html>
